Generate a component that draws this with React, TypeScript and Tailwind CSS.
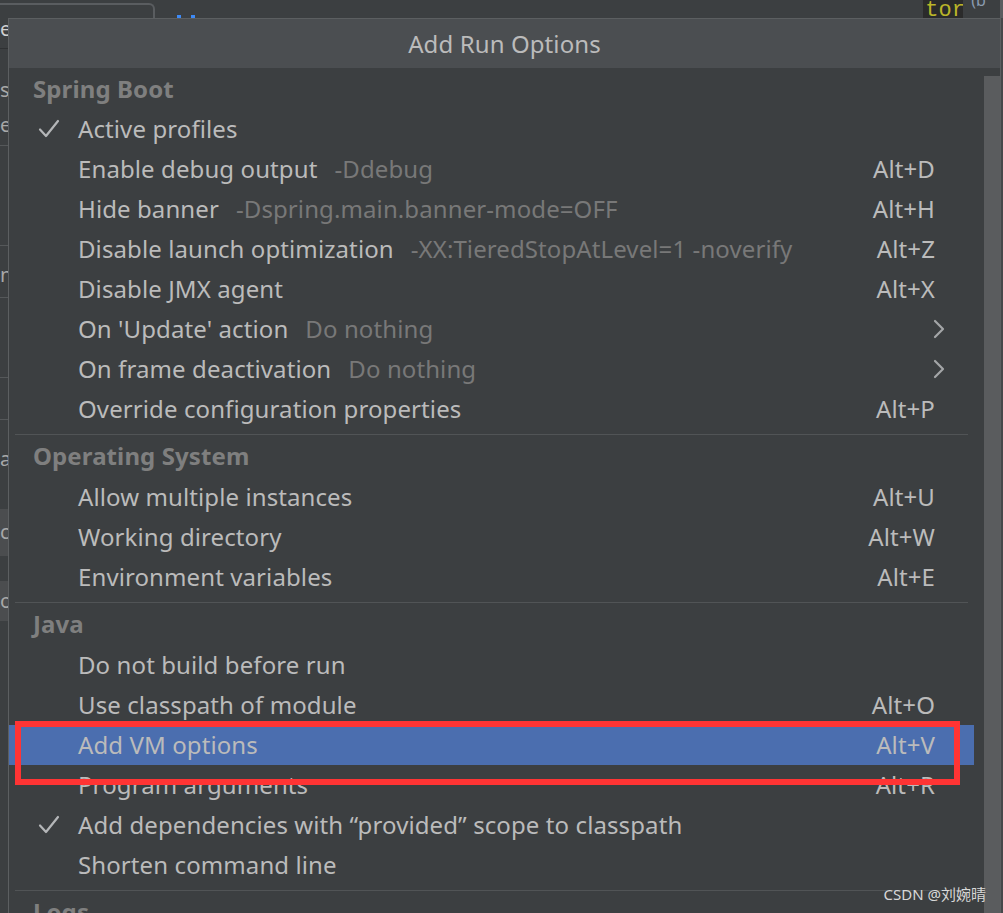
import React from 'react';

type Item = {
  label: string;
  hint?: string;
  shortcut?: string;
  checked?: boolean;
  submenu?: boolean;
  selected?: boolean;
};

type Section = { title: string; items: Item[] };

const sections: Section[] = [
  {
    title: 'Spring Boot',
    items: [
      { label: 'Active profiles', checked: true },
      { label: 'Enable debug output', hint: '-Ddebug', shortcut: 'Alt+D' },
      { label: 'Hide banner', hint: '-Dspring.main.banner-mode=OFF', shortcut: 'Alt+H' },
      { label: 'Disable launch optimization', hint: '-XX:TieredStopAtLevel=1 -noverify', shortcut: 'Alt+Z' },
      { label: 'Disable JMX agent', shortcut: 'Alt+X' },
      { label: "On 'Update' action", hint: 'Do nothing', submenu: true },
      { label: 'On frame deactivation', hint: 'Do nothing', submenu: true },
      { label: 'Override configuration properties', shortcut: 'Alt+P' },
    ],
  },
  {
    title: 'Operating System',
    items: [
      { label: 'Allow multiple instances', shortcut: 'Alt+U' },
      { label: 'Working directory', shortcut: 'Alt+W' },
      { label: 'Environment variables', shortcut: 'Alt+E' },
    ],
  },
  {
    title: 'Java',
    items: [
      { label: 'Do not build before run' },
      { label: 'Use classpath of module', shortcut: 'Alt+O' },
      { label: 'Add VM options', shortcut: 'Alt+V', selected: true },
      { label: 'Program arguments', shortcut: 'Alt+R' },
      { label: 'Add dependencies with \u201cprovided\u201d scope to classpath', checked: true },
      { label: 'Shorten command line' },
    ],
  },
  {
    title: 'Logs',
    items: [{ label: 'Specify logs to be shown in console' }],
  },
];

const Check = () => (
  <svg width="24" height="24" viewBox="0 0 24 24" fill="none">
    <path d="M3 12.5 L9 19 L21 4" stroke="#b4b6b8" strokeWidth="2.2" strokeLinecap="round" strokeLinejoin="round" />
  </svg>
);

const Chevron = () => (
  <svg width="12" height="20" viewBox="0 0 12 20" fill="none">
    <path d="M2 2 L10 10 L2 18" stroke="#a4a6a8" strokeWidth="2.2" strokeLinecap="round" strokeLinejoin="round" />
  </svg>
);

const Row = ({ item }: { item: Item }) => (
  <div
    className={`relative flex h-10 items-center ${item.submenu ? 'pr-[29px]' : 'pr-[39px]'} ${
      item.selected ? 'bg-[#4b6eaf]' : ''
    }`}
  >
    <div className="flex w-[69px] shrink-0 pl-[28px]">{item.checked && <Check />}</div>
    <span className="whitespace-nowrap text-[#bbbbbb]">{item.label}</span>
    {item.hint && <span className="ml-[17px] whitespace-nowrap text-[#787878]">{item.hint}</span>}
    <div className="flex-1" />
    {item.shortcut && <span className="whitespace-nowrap text-[#bbbbbb]">{item.shortcut}</span>}
    {item.submenu && <Chevron />}
    {item.selected && (
      <div className="pointer-events-none absolute left-[6px] right-[14px] top-[-4px] z-10 h-[64px] border-[6px] border-[#ff3434]" />
    )}
  </div>
);

export default function App() {
  return (
    <div className="relative flex h-[913px] w-[1003px] flex-col overflow-hidden bg-[#3c3f41] font-['Noto_Sans',sans-serif] text-[24px] tracking-[0.1px]">
      {/* IDE behind the popup: top strip */}
      <div className="flex h-[18px] shrink-0 items-start">
        <div className="mt-[3px] h-[15px] w-[155px] rounded-tr-[6px] border-r-2 border-t-2 border-[#5a5d60]" />
        <div className="ml-[22px] mt-[15px] h-[3px] w-[4px] bg-[#3d8af7]" />
        <div className="ml-[10px] mt-[15px] h-[3px] w-[4px] bg-[#3d8af7]" />
        <div className="flex-1" />
        <div className="flex h-[18px] w-[40px] items-end overflow-hidden bg-[#2b2b2b] pl-[2px]">
          <span className="mb-[-4px] font-['Liberation_Mono',monospace] text-[22px] leading-[22px] text-[#bbb529]">tor</span>
        </div>
        <div className="ml-[8px] h-[18px] overflow-hidden">
          <span className="mt-[-10px] block text-[16px] leading-[20px] text-[#8a9bb0]">(b</span>
        </div>
        <div className="ml-[14px] h-[18px] w-[3px] bg-[#5a5d60]" />
      </div>

      <div className="flex min-h-0 flex-1">
        {/* IDE behind the popup: left strip */}
        <div className="flex w-[8px] shrink-0 flex-col overflow-hidden text-[20px] leading-[20px] text-[#a8a8a8]">
          <div className="h-[30px] pt-[1px] text-[#d0d0d0]">e</div>
          <div className="h-px bg-[#2f3133]" />
          <div className="h-[29px]" />
          <div className="h-[30px] pt-[2px]">s</div>
          <div className="h-[32px] pt-[7px]">e</div>
          <div className="h-[5px]" />
          <div className="h-px bg-[#55585a]" />
          <div className="h-[99px]" />
          <div className="h-px bg-[#55585a]" />
          <div className="h-[51px] pt-[19px]">n</div>
          <div className="h-px bg-[#55585a]" />
          <div className="h-[79px]" />
          <div className="h-px bg-[#55585a]" />
          <div className="h-[41px]" />
          <div className="h-px bg-[#55585a]" />
          <div className="h-[89px] pt-[29px]">a</div>
          <div className="h-[47px] bg-[#4b4d4f] pt-[13px]">c</div>
          <div className="h-[25px]" />
          <div className="h-[40px] bg-[#4b4d4f] pt-[10px]">o</div>
        </div>

        {/* Popup */}
        <div className="flex min-w-0 flex-1 flex-col border-l border-r border-t border-[#5c5f61] bg-[#3c3f41]">
          <div className="flex h-[49px] shrink-0 items-center justify-center bg-[#4b4e51] text-[#bbbbbb]">
            Add Run Options
          </div>
          <div className="flex min-h-0 flex-1">
            <div className="flex min-w-0 flex-1 flex-col pt-px">
              {sections.map((section, si) => (
                <div key={section.title}>
                  {si > 0 && (
                    <div className="pt-[5px]">
                      <div className="mx-[6px] h-px bg-[#515456]" />
                    </div>
                  )}
                  <div className={`flex ${si === 0 ? 'h-10' : 'h-[42px]'} items-center pl-[24px] font-bold text-[#7f7f7f]`}>
                    {section.title}
                  </div>
                  {section.items.map((item) => (
                    <Row key={item.label} item={item} />
                  ))}
                </div>
              ))}
            </div>
            <div className="ml-[10px] mt-[8px] w-[16px] shrink-0 bg-[#5a5c5e]" />
          </div>
        </div>
        <div className="w-[2px] shrink-0 bg-[#46484a]" />
      </div>

      <div className="pointer-events-none absolute bottom-[8px] right-[17px] z-20 font-['Noto_Sans','Noto_Sans_CJK_SC',sans-serif] text-[15px] tracking-normal text-[#d8d8d8]">
        CSDN @刘婉晴
      </div>
    </div>
  );
}
